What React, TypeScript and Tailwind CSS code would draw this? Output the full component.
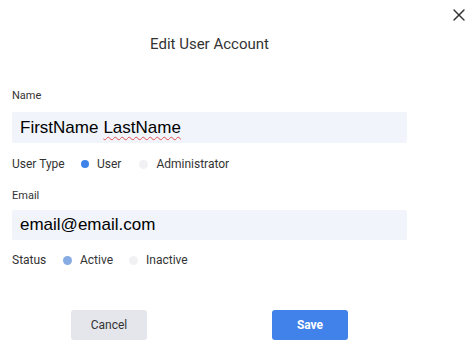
import { X } from "lucide-react";

function Radio({ label, checked, faded }: { label: string; checked?: boolean; faded?: boolean }) {
  return (
    <label className="flex items-center gap-[8px]">
      <span
        className={
          checked
            ? faded
              ? "w-[9px] h-[9px] rounded-full bg-[#86ace3]"
              : "w-[8px] h-[8px] rounded-full bg-[#3f82e8]"
            : "w-[9px] h-[9px] rounded-full bg-[#f1f1f3]"
        }
      />
      <span>{label}</span>
    </label>
  );
}

export default function App(): JSX.Element {
  return (
    <div
      className="relative w-[474px] h-[351px] bg-white text-[#333] overflow-hidden"
      style={{ fontFamily: "Roboto, Inter, 'Liberation Sans', sans-serif" }}
    >
      <button className="absolute right-[5px] top-[5px] text-[#333]">
        <X size={20} strokeWidth={1.7} />
      </button>

      <div className="w-[395px] ml-[12px] flex flex-col">
        <h1 className="pt-[35px] text-center text-[15px] leading-[18px] text-[#333]">Edit User Account</h1>

        <div className="mt-[36px] text-[11px] leading-[14px]">Name</div>
        <div className="mt-[9px] h-[31px] bg-[#f1f4fa] rounded-[2px] flex items-center px-[8px] text-[17px] text-black font-['Liberation_Sans',sans-serif]">
          FirstName{" "}
          <span className="ml-[5px] underline decoration-wavy decoration-[#e05050] decoration-[1px] underline-offset-[3px]">
            LastName
          </span>
        </div>

        <div className="mt-[14px] flex items-center text-[12px] leading-[14px]">
          <span className="w-[69px]">User Type</span>
          <Radio label="User" checked />
          <span className="w-[18px]" />
          <Radio label="Administrator" />
        </div>

        <div className="mt-[18px] text-[11px] leading-[14px]">Email</div>
        <div className="mt-[7px] h-[30px] bg-[#f1f4fa] rounded-[2px] flex items-center px-[8px] text-[17px] text-black font-['Liberation_Sans',sans-serif]">
          email@email.com
        </div>

        <div className="mt-[13px] flex items-center text-[12px] leading-[14px]">
          <span className="w-[51px]">Status</span>
          <Radio label="Active" checked faded />
          <span className="w-[16px]" />
          <Radio label="Inactive" />
        </div>

        <div className="mt-[43px] flex">
          <button className="ml-[59px] w-[76px] h-[30px] rounded-[3px] bg-[#e4e6ec] text-[12px] text-[#333]">Cancel</button>
          <button className="ml-[125px] w-[76px] h-[30px] rounded-[3px] bg-[#4181ea] text-[12px] font-bold text-white">Save</button>
        </div>
      </div>
    </div>
  );
}
